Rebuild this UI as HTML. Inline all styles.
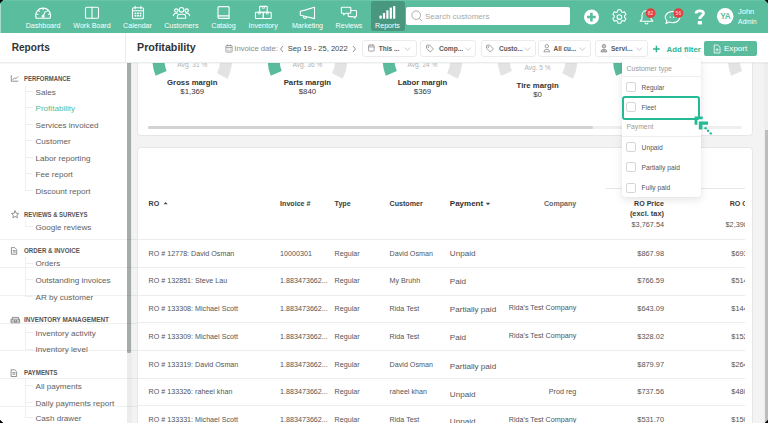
<!DOCTYPE html>
<html><head><meta charset="utf-8">
<style>
*{box-sizing:border-box;margin:0;padding:0}
html,body{width:768px;height:423px;overflow:hidden;background:#fff;font-family:"Liberation Sans",sans-serif;color:#444}
.a{position:absolute;white-space:nowrap}
#top{z-index:5;position:absolute;left:0;top:0;width:768px;height:33px;background:#59bd9e}
.nav{position:absolute;top:0;height:33px;color:#fff;font-size:7.1px;text-align:center}
.nav svg{position:absolute;left:50%;top:6px;transform:translateX(-50%)}
.nav span{position:absolute;left:50%;top:21.6px;transform:translateX(-50%);white-space:nowrap}
#side{position:absolute;left:0;top:33px;width:126px;height:390px}
.sh{position:absolute;left:23.6px;font-size:6.2px;font-weight:700;color:#555;letter-spacing:0;transform-origin:0 50%;transform:scale(.9,1.05)}
.si{position:absolute;left:35.5px;font-size:8.1px;color:#616161;line-height:10px}
.tick{position:absolute;left:24.5px;width:8.5px;height:1px;background:#efefef}
.vl{position:absolute;left:24.5px;width:1px;background:#efefef}
#main{position:absolute;left:0;top:0;width:768px;height:423px}
.card{position:absolute;background:#fff;border:1px solid #e6e6e6;border-radius:3.5px}
.th{position:absolute;font-size:7.2px;font-weight:700;color:#3d3d3d}
.td{position:absolute;font-size:7.2px;color:#4a4a4a}
.rl{position:absolute;left:5px;width:609px;height:1px;background:#e6e6e6}
.fb{position:absolute;top:40px;height:17px;border:1px solid #ebebeb;border-radius:3px;background:#fff;font-size:7px;color:#444}
.cb{position:absolute;left:5px;width:10px;height:10px;border:1px solid #cfcfcf;border-radius:2px;background:#fff}
.dt{position:absolute;left:20px;font-size:7px;color:#555}
</style></head><body>

<div id="top">
<div class="a" style="left:0;top:0;width:768px;height:1px;background:rgba(255,255,255,.1)"></div><div class="a" style="left:0;top:4px;width:1px;height:29px;background:rgba(255,255,255,.45)"></div>
<div class="a" style="left:370.5px;top:1px;width:34px;height:30.3px;background:#48977e;border-radius:2.5px"></div>
<svg class="a" style="left:0;top:0" width="410" height="33" viewBox="0 0 410 33" fill="none" stroke="#fff" stroke-width="1.1" stroke-linecap="round" stroke-linejoin="round">
<!-- dashboard gauge -->
<path d="M36.2 18.2 A7.4 7.4 0 1 1 50 18.2 Z"/>
<path d="M43.1 8.6v1.2M38.6 10.6l.8.8M47.6 10.6l-.8.8M36.8 14.3h1.2M48.4 14.3h1.2"/>
<path d="M43.1 16.2l2.2-4.6"/><circle cx="43.1" cy="16.3" r="1" fill="#fff"/>
<!-- work board -->
<rect x="85.5" y="7.2" width="13" height="11" rx="1.3"/><path d="M92 7.2v11"/>
<!-- calendar -->
<rect x="132.5" y="7.8" width="11" height="11" rx="1.3"/><path d="M132.5 10.8h11M135.2 6.3v2.4M140.8 6.3v2.4"/>
</svg><svg class="a" style="left:0;top:0" width="200" height="33" viewBox="0 0 200 33" fill="#fff"><rect x="134.6" y="12.6" width="1.7" height="1.6"/><rect x="137.15" y="12.6" width="1.7" height="1.6"/><rect x="139.7" y="12.6" width="1.7" height="1.6"/><rect x="134.6" y="15" width="1.7" height="1.6"/><rect x="137.15" y="15" width="1.7" height="1.6"/><rect x="139.7" y="15" width="1.7" height="1.6"/></svg><svg class="a" style="left:0;top:0" width="410" height="33" viewBox="0 0 410 33" fill="none" stroke="#fff" stroke-width="1.1" stroke-linecap="round" stroke-linejoin="round">
<!-- customers -->
<circle cx="181.5" cy="9.8" r="2.3"/><circle cx="176.3" cy="10.6" r="1.7"/><circle cx="186.7" cy="10.6" r="1.7"/>
<path d="M177.3 18.3v-1.5a2.6 2.6 0 0 1 2.6-2.6h3.2a2.6 2.6 0 0 1 2.6 2.6v1.5z"/>
<path d="M173.4 15.6a2.6 2.6 0 0 1 2.8-2.4h1.2M189.6 15.6a2.6 2.6 0 0 0-2.8-2.4h-1.2"/>
<!-- catalog -->
<path d="M218 17V7.8a1.2 1.2 0 0 1 1.2-1.2h8.9a1 1 0 0 1 1 1V18.4h-9.9a1.2 1.2 0 0 1-1.2-1.4a1.2 1.2 0 0 1 1.2-1.1h9.9"/>
<!-- inventory -->
<rect x="259.6" y="6.4" width="7.6" height="5.8" rx=".5"/><rect x="255.5" y="12.2" width="7.8" height="6.3" rx=".5"/><rect x="263.3" y="12.2" width="7.9" height="6.3" rx=".5"/>
<path d="M262.4 6.4v1.9h2v-1.9M258.3 12.2v1.8h2v-1.8M266.3 12.2v1.8h2v-1.8" stroke-width=".8"/>
<!-- marketing -->
<path d="M300.3 11.3v4l4.6 1 9.6 2.3V7.2l-9.6 2.9z"/><path d="M303.5 16.3a1.6 1.6 0 0 0 3.1.8"/>
<!-- reviews -->
<path d="M342.3 7.2h7.6a.9.9 0 0 1 .9.9v4.3a.9.9 0 0 1-.9.9h-4.4l-1.8 1.5v-1.5h-1.4a.9.9 0 0 1-.9-.9V8.1a.9.9 0 0 1 .9-.9z"/>
<path d="M350.8 10.5h4.8a.9.9 0 0 1 .9.9v4.3a.9.9 0 0 1-.9.9h-.6v1.6l-1.8-1.6h-4.1a.9.9 0 0 1-.9-.9v-2.3"/>
</svg>
<svg class="a" style="left:0;top:0" width="410" height="33" viewBox="0 0 410 33" fill="#fff">
<rect x="379.5" y="15.6" width="2.2" height="3.2" rx=".6"/><rect x="382.9" y="12.9" width="2.2" height="5.9" rx=".6"/><rect x="386.3" y="10.2" width="2.2" height="8.6" rx=".6"/><rect x="389.7" y="7.6" width="2.2" height="11.2" rx=".6"/><rect x="393.1" y="5.9" width="2.2" height="12.9" rx=".6"/>
</svg>
<div class="nav" style="left:43px"><span>Dashboard</span></div>
<div class="nav" style="left:92px"><span>Work Board</span></div>
<div class="nav" style="left:137.5px"><span>Calendar</span></div>
<div class="nav" style="left:181.3px"><span>Customers</span></div>
<div class="nav" style="left:223.5px"><span>Catalog</span></div>
<div class="nav" style="left:263.2px"><span>Inventory</span></div>
<div class="nav" style="left:307.5px"><span>Marketing</span></div>
<div class="nav" style="left:349px"><span>Reviews</span></div>
<div class="nav" style="left:387.5px"><span>Reports</span></div>
<div class="a" style="left:405.8px;top:7.2px;width:164.2px;height:18.2px;background:#fff;border-radius:2px"></div>
<svg class="a" style="left:410.5px;top:10px" width="13" height="13" viewBox="0 0 13 13" fill="none" stroke="#a5a5a5" stroke-width=".9"><circle cx="5.2" cy="5.2" r="4.3"/><path d="M8.3 8.3l2.8 3"/></svg>
<div class="a" style="left:425px;top:11.7px;font-size:8px;color:#a8a8a8">Search customers</div>
<svg class="a" style="left:560px;top:0" width="208" height="33" viewBox="560 0 208 33">
<circle cx="591.5" cy="17" r="7.5" fill="#fff"/>
<path d="M591.4 12.7v8.7M587.05 17.05h8.7" stroke="#59bd9e" stroke-width="2.6"/>
<g fill="none" stroke="#fff" stroke-width="1.1" stroke-linejoin="round">
<path d="M617.9 9.8h3l.4 1.9 1.4.8 1.8-.7 1.5 2.6-1.4 1.3v1.6l1.4 1.3-1.5 2.6-1.8-.7-1.4.8-.4 1.9h-3l-.4-1.9-1.4-.8-1.8.7-1.5-2.6 1.4-1.3v-1.6l-1.4-1.3 1.5-2.6 1.8.7 1.4-.8z"/>
<circle cx="619.4" cy="17.1" r="2.3"/>
<path d="M640.2 21.2h12.6l-1.8-2.4v-3.6a4.5 4.5 0 0 0-9 0v3.6z"/><path d="M645 22.5a1.5 1.5 0 0 0 3 0"/>
<path d="M673.6 11.6a7.2 5.6 0 1 1-4.6 10.4l-3 1.5.9-2.9a7.2 5.6 0 0 1 6.7-9z"/>
</g>
<circle cx="670.2" cy="17.2" r=".7" fill="#fff"/><circle cx="673.6" cy="17.2" r=".7" fill="#fff"/><circle cx="677" cy="17.2" r=".7" fill="#fff"/>
<circle cx="650.6" cy="13.1" r="4.9" fill="#e1403f"/><circle cx="678.4" cy="13.1" r="4.9" fill="#e1403f"/>
<circle cx="725.2" cy="16.3" r="8.3" fill="#fff"/>
</svg>
<div class="a" style="left:645.6px;top:10px;width:10px;text-align:center;font-size:5px;color:#fde">82</div>
<div class="a" style="left:673.4px;top:10px;width:10px;text-align:center;font-size:5px;color:#fde">56</div>
<svg class="a" style="left:690px;top:6px" width="20" height="21" viewBox="690 6 20 21"><path d="M696.1 13.4C696.1 11.4 697.6 10.9 699.8 10.9C702 10.9 703.5 11.8 703.5 13.6C703.5 15.6 699.8 16 699.8 19" fill="none" stroke="#fff" stroke-width="2.8"/><rect x="697.7" y="21" width="4.3" height="3.4" rx="1" fill="#fff"/></svg>
<div class="a" style="left:717px;top:12px;width:16.5px;text-align:center;font-size:8.2px;line-height:9px;font-weight:700;color:#5bbc9d;letter-spacing:-.3px">YA</div>
<div class="a" style="left:738px;top:8.3px;font-size:7.5px;color:#fff;line-height:8px">John</div>
<div class="a" style="left:738px;top:18.1px;font-size:6.6px;color:#fff;line-height:8px">Admin</div>
</div>

<div id="main">
<div class="a" style="left:131px;top:63px;width:637px;height:360px;background:#f3f3f3"></div>
<div class="a" style="left:127px;top:63px;width:4.5px;height:360px;background:#ececec"></div>
<div class="a" style="left:127.3px;top:63px;width:3.8px;height:289.6px;background:#a6acac;border-radius:0 0 1.2px 1.2px"></div>
<div class="a" style="left:0;top:239px;width:137.5px;height:1px;background:rgba(40,60,50,.075)"></div><div class="a" style="left:0;top:266.8px;width:137.5px;height:1px;background:rgba(40,60,50,.075)"></div><div class="a" style="left:0;top:294.6px;width:137.5px;height:1px;background:rgba(40,60,50,.075)"></div><div class="a" style="left:0;top:322.5px;width:137.5px;height:1px;background:rgba(40,60,50,.075)"></div><div class="a" style="left:0;top:350px;width:137.5px;height:1px;background:rgba(40,60,50,.075)"></div><div class="a" style="left:0;top:377.8px;width:137.5px;height:1px;background:rgba(40,60,50,.075)"></div><div class="a" style="left:0;top:405.5px;width:137.5px;height:1px;background:rgba(40,60,50,.075)"></div>

<div class="a" style="left:764.2px;top:63px;width:3.8px;height:360px;background:#ededed"></div>
<div class="a" style="left:764.5px;top:130.4px;width:3.5px;height:293px;background:#bdbdbd"></div>
<div class="card" style="left:136.8px;top:20px;width:616.2px;height:116.3px"></div>
<svg class="a" style="left:137px;top:20px" width="616" height="116" viewBox="137 20 616 116">
<clipPath id="c1"><rect x="138" y="20" width="614" height="115"/></clipPath><g clip-path="url(#c1)">
<path d="M155.65 75.66A39.7 39.7 0 0 1 166.10 30.57L173.95 39.51A27.8 27.8 0 0 0 166.63 71.08Z" fill="#5bbc9d"/>
<path d="M166.10 30.57A39.7 39.7 0 0 1 227.55 78.67L216.98 73.19A27.8 27.8 0 0 0 173.95 39.51Z" fill="#e3e3e3"/>
<path d="M270.75 75.66A39.7 39.7 0 0 1 287.67 25.95L293.58 36.28A27.8 27.8 0 0 0 281.73 71.08Z" fill="#5bbc9d"/>
<path d="M287.67 25.95A39.7 39.7 0 0 1 342.65 78.67L332.08 73.19A27.8 27.8 0 0 0 293.58 36.28Z" fill="#e3e3e3"/>
<path d="M385.85 75.66A39.7 39.7 0 0 1 389.05 39.01L399.08 45.42A27.8 27.8 0 0 0 396.83 71.08Z" fill="#5bbc9d"/>
<path d="M389.05 39.01A39.7 39.7 0 0 1 457.75 78.67L447.18 73.19A27.8 27.8 0 0 0 399.08 45.42Z" fill="#e3e3e3"/>
<path d="M500.95 75.66A39.7 39.7 0 1 1 572.85 78.67L562.28 73.19A27.8 27.8 0 1 0 511.93 71.08Z" fill="#e3e3e3"/>
<path d="M616.05 75.66A39.7 39.7 0 0 1 638.73 23.24L642.92 34.38A27.8 27.8 0 0 0 627.03 71.08Z" fill="#5bbc9d"/>
<path d="M638.73 23.24A39.7 39.7 0 0 1 687.95 78.67L677.38 73.19A27.8 27.8 0 0 0 642.92 34.38Z" fill="#e3e3e3"/>
<path d="M731.15 75.66A39.7 39.7 0 1 1 803.05 78.67L792.48 73.19A27.8 27.8 0 1 0 742.13 71.08Z" fill="#e3e3e3"/>
</g></svg>
<div class="a" style="left:142.3px;width:100px;text-align:center;top:62px;line-height:6.6px;font-size:6.6px;color:#b3b3b3">Avg. 31 %</div>
<div class="a" style="left:142.3px;width:100px;text-align:center;top:79px;line-height:7.75px;font-size:7.75px;font-weight:700;color:#333">Gross margin</div>
<div class="a" style="left:142.3px;width:100px;text-align:center;top:88px;line-height:7.8px;font-size:7.8px;color:#3a3a3a">$1,369</div>
<div class="a" style="left:257.4px;width:100px;text-align:center;top:62px;line-height:6.6px;font-size:6.6px;color:#b3b3b3">Avg. 36 %</div>
<div class="a" style="left:257.4px;width:100px;text-align:center;top:79px;line-height:7.75px;font-size:7.75px;font-weight:700;color:#333">Parts margin</div>
<div class="a" style="left:257.4px;width:100px;text-align:center;top:88px;line-height:7.8px;font-size:7.8px;color:#3a3a3a">$840</div>
<div class="a" style="left:372.5px;width:100px;text-align:center;top:62px;line-height:6.6px;font-size:6.6px;color:#b3b3b3">Avg. 24 %</div>
<div class="a" style="left:372.5px;width:100px;text-align:center;top:79px;line-height:7.75px;font-size:7.75px;font-weight:700;color:#333">Labor margin</div>
<div class="a" style="left:372.5px;width:100px;text-align:center;top:88px;line-height:7.8px;font-size:7.8px;color:#3a3a3a">$369</div>
<div class="a" style="left:487.6px;width:100px;text-align:center;top:65px;line-height:6.6px;font-size:6.6px;color:#b3b3b3">Avg. 5 %</div>
<div class="a" style="left:487.6px;width:100px;text-align:center;top:82px;line-height:7.75px;font-size:7.75px;font-weight:700;color:#333">Tire margin</div>
<div class="a" style="left:487.6px;width:100px;text-align:center;top:91px;line-height:7.8px;font-size:7.8px;color:#3a3a3a">$0</div>
<div class="a" style="left:148px;top:126px;width:594px;height:3px;background:#efefef;border-radius:1.5px"></div>
<div class="a" style="left:148px;top:126px;width:445px;height:3px;background:#d3d3d3;border-radius:1.5px"></div>
<div class="card" style="left:136.8px;top:146.9px;width:616.2px;height:300px"></div>
<div class="a" style="left:137.5px;top:147.6px;width:607.2px;height:276px;overflow:hidden">
<div class="a" style="left:468.5px;top:40.9px;width:200px;height:1px;background:#e6e6e6"></div>
<div class="a" style="left:0;top:91.4px;width:620px;height:1px;background:#ececec"></div>
<div class="a" style="left:0;top:119.2px;width:620px;height:1px;background:#ececec"></div>
<div class="a" style="left:0;top:147.0px;width:620px;height:1px;background:#ececec"></div>
<div class="a" style="left:0;top:174.9px;width:620px;height:1px;background:#ececec"></div>
<div class="a" style="left:0;top:202.4px;width:620px;height:1px;background:#ececec"></div>
<div class="a" style="left:0;top:230.2px;width:620px;height:1px;background:#ececec"></div>
<div class="a" style="left:0;top:257.9px;width:620px;height:1px;background:#ececec"></div>
<div class="a" style="left:11.10px;top:53.40px;font-size:7.1px;line-height:7.1px;font-weight:700;color:#3a3a3a">RO</div>
<div class="a" style="left:142.60px;top:53.40px;font-size:7.1px;line-height:7.1px;font-weight:700;color:#3a3a3a">Invoice #</div>
<div class="a" style="left:197.10px;top:53.40px;font-size:7.1px;line-height:7.1px;font-weight:700;color:#3a3a3a">Type</div>
<div class="a" style="left:252.10px;top:53.40px;font-size:7.1px;line-height:7.1px;font-weight:700;color:#3a3a3a">Customer</div>
<div class="a" style="left:312.30px;top:52.40px;font-size:8px;line-height:8px;font-weight:700;color:#333">Payment</div>
<div class="a" style="left:288.80px;top:53.40px;width:150px;text-align:right;font-size:7.1px;line-height:7.1px;font-weight:700;color:#666">Company</div>
<div class="a" style="left:376.50px;top:53.40px;width:150px;text-align:right;font-size:7.1px;line-height:7.1px;font-weight:700;color:#3a3a3a">RO Price</div>
<div class="a" style="left:376.50px;top:62.40px;width:150px;text-align:right;font-size:7.4px;line-height:7.4px;font-weight:700;color:#3a3a3a">(excl. tax)</div>
<div class="a" style="left:376.50px;top:73.40px;width:150px;text-align:right;font-size:7.3px;line-height:7.3px;color:#555">$3,767.54</div>
<div class="a" style="left:470.50px;top:53.40px;width:150px;text-align:right;font-size:7.1px;line-height:7.1px;font-weight:700;color:#3a3a3a">RO Cost</div>
<div class="a" style="left:470.50px;top:73.40px;width:150px;text-align:right;font-size:7.3px;line-height:7.3px;color:#555">$2,398.12</div>
<svg class="a" style="left:25.00px;top:53.00px;" width="6" height="4" viewBox="0 0 6 4"><path d="M.6 3.2L2.6 .9l2 2.3z" fill="#444"/></svg>
<svg class="a" style="left:347.50px;top:54.70px;" width="6" height="4" viewBox="0 0 6 4"><path d="M.8 .8L3 3.2l2.2-2.4z" fill="#444"/></svg>
<div class="a" style="left:11.10px;top:103.40px;font-size:7.15px;line-height:7.15px;color:#555">RO # 12778: David Osman</div>
<div class="a" style="left:142.60px;top:103.40px;font-size:7.15px;line-height:7.15px;color:#555">10000301</div>
<div class="a" style="left:197.10px;top:103.40px;font-size:7.15px;line-height:7.15px;color:#555">Regular</div>
<div class="a" style="left:252.10px;top:103.40px;font-size:7.15px;line-height:7.15px;color:#555">David Osman</div>
<div class="a" style="left:312.30px;top:102.40px;font-size:8.1px;line-height:8.1px;color:#555">Unpaid</div>
<div class="a" style="left:376.50px;top:102.40px;width:150px;text-align:right;font-size:7.4px;line-height:7.4px;color:#555">$867.98</div>
<div class="a" style="left:470.50px;top:102.40px;width:150px;text-align:right;font-size:7.4px;line-height:7.4px;color:#555">$693.20</div>
<div class="a" style="left:11.10px;top:130.40px;font-size:7.15px;line-height:7.15px;color:#555">RO # 132851: Steve Lau</div>
<div class="a" style="left:142.60px;top:130.40px;font-size:7.15px;line-height:7.15px;color:#555">1.883473662...</div>
<div class="a" style="left:197.10px;top:130.40px;font-size:7.15px;line-height:7.15px;color:#555">Regular</div>
<div class="a" style="left:252.10px;top:130.40px;font-size:7.15px;line-height:7.15px;color:#555">My Bruhh</div>
<div class="a" style="left:312.30px;top:130.40px;font-size:8.1px;line-height:8.1px;color:#555">Paid</div>
<div class="a" style="left:376.50px;top:129.40px;width:150px;text-align:right;font-size:7.4px;line-height:7.4px;color:#555">$766.59</div>
<div class="a" style="left:470.50px;top:129.40px;width:150px;text-align:right;font-size:7.4px;line-height:7.4px;color:#555">$514.10</div>
<div class="a" style="left:11.10px;top:158.40px;font-size:7.15px;line-height:7.15px;color:#555">RO # 133308: Michael Scott</div>
<div class="a" style="left:142.60px;top:158.40px;font-size:7.15px;line-height:7.15px;color:#555">1.883473662...</div>
<div class="a" style="left:197.10px;top:158.40px;font-size:7.15px;line-height:7.15px;color:#555">Regular</div>
<div class="a" style="left:252.10px;top:158.40px;font-size:7.15px;line-height:7.15px;color:#555">Rida Test</div>
<div class="a" style="left:312.30px;top:158.40px;font-size:8.1px;line-height:8.1px;color:#555">Partially paid</div>
<div class="a" style="left:288.80px;top:156.40px;width:150px;text-align:right;font-size:7.2px;line-height:7.2px;color:#555">Rida&#39;s Test Company</div>
<div class="a" style="left:376.50px;top:157.40px;width:150px;text-align:right;font-size:7.4px;line-height:7.4px;color:#555">$643.09</div>
<div class="a" style="left:470.50px;top:157.40px;width:150px;text-align:right;font-size:7.4px;line-height:7.4px;color:#555">$144.00</div>
<div class="a" style="left:11.10px;top:186.40px;font-size:7.15px;line-height:7.15px;color:#555">RO # 133309: Michael Scott</div>
<div class="a" style="left:142.60px;top:186.40px;font-size:7.15px;line-height:7.15px;color:#555">1.883473662...</div>
<div class="a" style="left:197.10px;top:186.40px;font-size:7.15px;line-height:7.15px;color:#555">Regular</div>
<div class="a" style="left:252.10px;top:186.40px;font-size:7.15px;line-height:7.15px;color:#555">Rida Test</div>
<div class="a" style="left:312.30px;top:186.40px;font-size:8.1px;line-height:8.1px;color:#555">Paid</div>
<div class="a" style="left:288.80px;top:184.40px;width:150px;text-align:right;font-size:7.2px;line-height:7.2px;color:#555">Rida&#39;s Test Company</div>
<div class="a" style="left:376.50px;top:185.40px;width:150px;text-align:right;font-size:7.4px;line-height:7.4px;color:#555">$328.02</div>
<div class="a" style="left:470.50px;top:185.40px;width:150px;text-align:right;font-size:7.4px;line-height:7.4px;color:#555">$152.30</div>
<div class="a" style="left:11.10px;top:214.40px;font-size:7.15px;line-height:7.15px;color:#555">RO # 133319: David Osman</div>
<div class="a" style="left:142.60px;top:214.40px;font-size:7.15px;line-height:7.15px;color:#555">1.883473662...</div>
<div class="a" style="left:197.10px;top:214.40px;font-size:7.15px;line-height:7.15px;color:#555">Regular</div>
<div class="a" style="left:252.10px;top:214.40px;font-size:7.15px;line-height:7.15px;color:#555">David Osman</div>
<div class="a" style="left:312.30px;top:215.40px;font-size:8.1px;line-height:8.1px;color:#555">Partially paid</div>
<div class="a" style="left:376.50px;top:213.40px;width:150px;text-align:right;font-size:7.4px;line-height:7.4px;color:#555">$879.97</div>
<div class="a" style="left:470.50px;top:213.40px;width:150px;text-align:right;font-size:7.4px;line-height:7.4px;color:#555">$264.50</div>
<div class="a" style="left:11.10px;top:241.40px;font-size:7.15px;line-height:7.15px;color:#555">RO # 133326: raheel khan</div>
<div class="a" style="left:142.60px;top:241.40px;font-size:7.15px;line-height:7.15px;color:#555">1.883473662...</div>
<div class="a" style="left:197.10px;top:241.40px;font-size:7.15px;line-height:7.15px;color:#555">Regular</div>
<div class="a" style="left:252.10px;top:241.40px;font-size:7.15px;line-height:7.15px;color:#555">raheel khan</div>
<div class="a" style="left:312.30px;top:243.40px;font-size:8.1px;line-height:8.1px;color:#555">Unpaid</div>
<div class="a" style="left:288.80px;top:240.40px;width:150px;text-align:right;font-size:7.2px;line-height:7.2px;color:#555">Prod reg</div>
<div class="a" style="left:376.50px;top:240.40px;width:150px;text-align:right;font-size:7.4px;line-height:7.4px;color:#555">$737.56</div>
<div class="a" style="left:470.50px;top:240.40px;width:150px;text-align:right;font-size:7.4px;line-height:7.4px;color:#555">$480.00</div>
<div class="a" style="left:11.10px;top:269.40px;font-size:7.15px;line-height:7.15px;color:#555">RO # 133331: Michael Scott</div>
<div class="a" style="left:142.60px;top:269.40px;font-size:7.15px;line-height:7.15px;color:#555">1.883473662...</div>
<div class="a" style="left:197.10px;top:269.40px;font-size:7.15px;line-height:7.15px;color:#555">Regular</div>
<div class="a" style="left:252.10px;top:269.40px;font-size:7.15px;line-height:7.15px;color:#555">Rida Test</div>
<div class="a" style="left:312.30px;top:270.40px;font-size:8.1px;line-height:8.1px;color:#555">Unpaid</div>
<div class="a" style="left:288.80px;top:268.40px;width:150px;text-align:right;font-size:7.2px;line-height:7.2px;color:#555">Rida&#39;s Test Company</div>
<div class="a" style="left:376.50px;top:268.40px;width:150px;text-align:right;font-size:7.4px;line-height:7.4px;color:#555">$531.70</div>
<div class="a" style="left:470.50px;top:268.40px;width:150px;text-align:right;font-size:7.4px;line-height:7.4px;color:#555">$150.00</div>
</div>
</div>
<div id="subh">
<div class="a" style="left:0;top:33px;width:768px;height:30px;background:#fff"></div>
<div class="a" style="left:0;top:62px;width:768px;height:1px;background:#e9edeb"></div><div class="a" style="left:0;top:63px;width:768px;height:1px;background:rgba(0,40,20,.035)"></div>
<div class="a" style="left:125px;top:33px;width:1px;height:29px;background:#e8ecea"></div>
<div class="a" style="left:11.7px;top:41.5px;font-size:10.1px;font-weight:700;color:#333;line-height:12px">Reports</div>
<div class="a" style="left:137px;top:41px;font-size:10.7px;font-weight:700;color:#333;line-height:12px">Profitability</div>
<svg class="a" style="left:225px;top:44px" width="8" height="9" viewBox="0 0 8 9" fill="none" stroke="#8a8a8a" stroke-width=".8"><rect x=".9" y="1.5" width="6.2" height="6.6" rx=".8"/><path d="M.9 3.4h6.2M2.6.5v1.6M5.4.5v1.6"/><path d="M2.3 5h.8M3.6 5h.8M4.9 5h.8M2.3 6.5h.8M3.6 6.5h.8M4.9 6.5h.8" stroke-width=".6"/></svg>
<div class="a" style="left:234.3px;top:44px;font-size:7.7px;color:#8a8a8a;line-height:9px">Invoice date:</div>
<svg class="a" style="left:279px;top:44.5px" width="6" height="8" viewBox="0 0 6 8" fill="none" stroke="#777" stroke-width=".8"><path d="M4 1L1.5 4 4 7"/></svg>
<div class="a" style="left:287.7px;top:44px;font-size:7.55px;color:#444;line-height:9px">Sep 19 - 25, 2022</div>
<svg class="a" style="left:351px;top:44.5px" width="6" height="8" viewBox="0 0 6 8" fill="none" stroke="#777" stroke-width=".8"><path d="M2 1l2.5 3L2 7"/></svg>
<div class="fb" style="left:362.4px;width:54.2px"></div>
<div class="fb" style="left:420.4px;width:56px"></div>
<div class="fb" style="left:480.5px;width:55.7px"></div>
<div class="fb" style="left:538px;width:52.7px"></div>
<div class="fb" style="left:595.1px;width:53px"></div>
<svg class="a" style="left:360px;top:38px" width="300" height="20" viewBox="360 38 300 20" fill="none" stroke="#8a8a8a" stroke-width=".8" stroke-linejoin="round">
<rect x="368.6" y="45.1" width="5.6" height="6" rx=".7"/><path d="M368.6 46.9h5.6M370.1 44.2v1.4M372.7 44.2v1.4"/>
<path d="M404.8 47.6l2.7 2.8 2.7-2.8M465.5 47.6l2.7 2.8 2.7-2.8M524.9 47.6l2.7 2.8 2.7-2.8M579.6 47.6l2.7 2.8 2.7-2.8M636.5 47.6l2.7 2.8 2.7-2.8" stroke="#b5b5b5" stroke-width=".7"/>
<path d="M426.5 45.6v2.7l3.8 3.7 3.1-3.1-3.7-3.8h-2.7z"/><circle cx="428.3" cy="47" r=".5"/>
<path d="M486.5 45.6v2.7l3.8 3.7 3.1-3.1-3.7-3.8h-2.7z"/><circle cx="488.3" cy="47" r=".5"/>
<circle cx="546.8" cy="46.2" r="1.7"/><path d="M543.9 51.8a2.9 2.5 0 0 1 5.8 0z"/>
<circle cx="603.9" cy="46.2" r="1.8" fill="#c8c8c8"/><path d="M600.9 51.9a3 2.6 0 0 1 6 0z" fill="#c8c8c8"/><path d="M603.9 49.6v2.2"/>
</svg>
<div class="a" style="left:378.8px;top:45.2px;font-size:6.5px;font-weight:700;color:#585858;line-height:8px">This ...</div>
<div class="a" style="left:439px;top:45.2px;font-size:6.6px;font-weight:700;color:#585858;line-height:8px">Comp...</div>
<div class="a" style="left:499px;top:45.2px;font-size:6.5px;font-weight:700;color:#585858;line-height:8px">Custo...</div>
<div class="a" style="left:553.6px;top:45.2px;font-size:6.4px;font-weight:700;color:#585858;line-height:8px">All cu...</div>
<div class="a" style="left:610.9px;top:45.2px;font-size:6.6px;font-weight:700;color:#585858;line-height:8px">Servi...</div>
<svg class="a" style="left:652px;top:43.5px" width="9" height="10" viewBox="0 0 9 10" stroke="#2db48f" stroke-width="1.4"><path d="M4.4 1.7v6.6M1.1 5h6.6"/></svg>
<div class="a" style="left:666.6px;top:44.5px;font-size:7.8px;font-weight:700;color:#2db48f;line-height:9px">Add filter</div>
<div class="a" style="left:704.4px;top:40.6px;width:52.2px;height:15.8px;background:#5bbc9d;border-radius:2px"></div>
<svg class="a" style="left:713px;top:43.5px" width="8" height="10" viewBox="0 0 8 10" fill="none" stroke="#fff" stroke-width=".8" stroke-linejoin="round"><path d="M1.2 1h3.6L7 3.2V9H1.2z"/><path d="M4.1 4.2v3.2M2.6 5.8h3"/></svg>
<div class="a" style="left:724px;top:43.6px;font-size:8.05px;color:#fff;line-height:9px">Export</div>
</div>
<div id="side">
<div class="sh" style="top:43.4px;line-height:6.25px;font-size:6.9px;transform:scale(0.86,1.05)">PERFORMANCE</div>
<div class="vl" style="top:52.4px;height:105.4px"></div>
<div class="tick" style="top:57.7px"></div>
<div class="si" style="top:56px;line-height:8.1px;">Sales</div>
<div class="tick" style="top:74.2px"></div>
<div class="si" style="top:72px;line-height:8.1px;color:#55bb9a;">Profitability</div>
<div class="tick" style="top:90.5px"></div>
<div class="si" style="top:89px;line-height:8.1px;">Services invoiced</div>
<div class="tick" style="top:107.1px"></div>
<div class="si" style="top:105px;line-height:8.1px;">Customer</div>
<div class="tick" style="top:123.8px"></div>
<div class="si" style="top:122px;line-height:8.1px;">Labor reporting</div>
<div class="tick" style="top:140.3px"></div>
<div class="si" style="top:138px;line-height:8.1px;">Fee report</div>
<div class="tick" style="top:156.8px"></div>
<div class="si" style="top:155px;line-height:8.1px;">Discount report</div>
<div class="sh" style="top:179.1px;line-height:6.25px;font-size:6.9px;transform:scale(0.865,1.05)">REVIEWS &amp; SURVEYS</div>
<div class="vl" style="top:187.9px;height:6.1px"></div>
<div class="tick" style="top:193.0px"></div>
<div class="si" style="top:191px;line-height:8.1px;">Google reviews</div>
<div class="sh" style="top:214.56px;line-height:6.25px;font-size:6.9px;transform:scale(0.9,1.05)">ORDER &amp; INVOICE</div>
<div class="vl" style="top:224.3px;height:39.4px"></div>
<div class="tick" style="top:229.5px"></div>
<div class="si" style="top:227px;line-height:8.1px;">Orders</div>
<div class="tick" style="top:246.1px"></div>
<div class="si" style="top:244px;line-height:8.1px;">Outstanding invoices</div>
<div class="tick" style="top:262.7px"></div>
<div class="si" style="top:261px;line-height:8.1px;">AR by customer</div>
<div class="sh" style="top:283.76px;line-height:6.25px;font-size:6.9px;transform:scale(0.926,1.05)">INVENTORY MANAGEMENT</div>
<div class="vl" style="top:293.5px;height:23.0px"></div>
<div class="tick" style="top:299.1px"></div>
<div class="si" style="top:297px;line-height:8.1px;">Inventory activity</div>
<div class="tick" style="top:315.5px"></div>
<div class="si" style="top:313px;line-height:8.1px;">Inventory level</div>
<div class="sh" style="top:336.76px;line-height:6.25px;font-size:6.9px;transform:scale(0.9,1.05)">PAYMENTS</div>
<div class="vl" style="top:346.4px;height:39.0px"></div>
<div class="tick" style="top:352.1px"></div>
<div class="si" style="top:350px;line-height:8.1px;">All payments</div>
<div class="tick" style="top:368.5px"></div>
<div class="si" style="top:367px;line-height:8.1px;">Daily payments report</div>
<div class="tick" style="top:384.4px"></div>
<div class="si" style="top:382px;line-height:8.1px;">Cash drawer</div>
<svg class="a" style="left:0;top:0" width="126" height="390" viewBox="0 33 126 390" fill="none" stroke="#777" stroke-width=".8" stroke-linejoin="round" stroke-linecap="round">
<path d="M11.3 75.6v5.6h6.6M12.9 79.6l1.6-1.8 1.3 1 2-2.1"/>
<path d="M15.1 210.9l1.1 2.3 2.5.3-1.8 1.7.5 2.5-2.3-1.2-2.2 1.2.4-2.5-1.8-1.7 2.5-.3z"/>
<path d="M11.8 247.6h3l1.9 1.9v4.8h-4.9z M13.1 250.6h2.3M13.1 252.1h2.3"/>
<path d="M11.4 319.2h8.2v3.6h-8.2z M12.4 319.2v-1.8h6.2v1.8 M11.4 321h8.2 M14.5 320.3v1.5h2v-1.5"/>
<path d="M11.5 369.8h3.2l1.9 1.9v4.8h-5.1z M12.8 372.6h2.3M12.8 374.1h2.3"/>
</svg>
</div>


<div id="dd">
<div class="a" style="left:621.7px;top:58.5px;width:79.6px;height:138.5px;background:#fff;border-radius:3px;box-shadow:0 3px 9px rgba(0,0,0,.10),0 0 1px rgba(0,0,0,.12)"></div>
<svg class="a" style="left:676px;top:53px" width="15" height="7" viewBox="676 53 15 7"><path d="M677.5 59.2L683.8 55l6.3 4.2z" fill="#fff" stroke="#eee" stroke-width=".5"/><rect x="677" y="58.6" width="13.5" height="1.5" fill="#fff"/></svg>
<div class="a" style="left:621.7px;top:76px;width:79.6px;height:1px;background:#eeeeee"></div>
<div class="a" style="left:621.7px;top:136.3px;width:79.6px;height:1px;background:#eeeeee"></div>
<div class="a" style="left:626.5px;top:64.59px;font-size:7px;line-height:7px;color:#9a9a9a">Customer type</div>
<div class="a" style="left:626.5px;top:124.09px;font-size:6.8px;line-height:6.8px;color:#9a9a9a">Payment</div>
<div class="a" style="left:626px;top:82.2px;width:10.2px;height:10.2px;border:1px solid #d6d6d6;border-radius:2px;background:#fff"></div>
<div class="a" style="left:641.6px;top:84.6px;font-size:6.5px;line-height:6.5px;color:#555">Regular</div>
<div class="a" style="left:626px;top:102.3px;width:10.2px;height:10.2px;border:1px solid #d6d6d6;border-radius:2px;background:#fff"></div>
<div class="a" style="left:641.6px;top:104.7px;font-size:6.5px;line-height:6.5px;color:#555">Fleet</div>
<div class="a" style="left:626px;top:142.1px;width:10.2px;height:10.2px;border:1px solid #d6d6d6;border-radius:2px;background:#fff"></div>
<div class="a" style="left:641.6px;top:144.6px;font-size:6.7px;line-height:6.7px;color:#555">Unpaid</div>
<div class="a" style="left:626px;top:162.2px;width:10.2px;height:10.2px;border:1px solid #d6d6d6;border-radius:2px;background:#fff"></div>
<div class="a" style="left:641.6px;top:164.6px;font-size:6.7px;line-height:6.7px;color:#555">Partially paid</div>
<div class="a" style="left:626px;top:182.5px;width:10.2px;height:10.2px;border:1px solid #d6d6d6;border-radius:2px;background:#fff"></div>
<div class="a" style="left:641.6px;top:184.6px;font-size:6.7px;line-height:6.7px;color:#555">Fully paid</div>
<div class="a" style="left:621.7px;top:96.2px;width:78.2px;height:23.5px;border:2px solid #23ba95;border-radius:3px"></div>
<svg class="a" style="left:690px;top:112px" width="25" height="25" viewBox="690 112 25 25" fill="#23ba95"><path d="M694.6 116.5h8.1v2.8h-5.3v5.4h-2.8z"/><path d="M698.8 121.5h9.2v3.2h-5.6v4.9h-3.6z"/><circle cx="705.6" cy="128.2" r="1.2"/><circle cx="708.1" cy="130.8" r="1.2"/><circle cx="710.7" cy="133.4" r="1.2"/></svg>
</div>
<svg class="a" style="left:0;top:0;z-index:20" width="768" height="423" viewBox="0 0 768 423"><path d="M0 0h3.3L0 3.3z M768 0h-3.3L768 3.3z M0 423v-3.3L3.3 423z M768 423v-3.3L764.7 423z" fill="#000"/></svg>
</body></html>
